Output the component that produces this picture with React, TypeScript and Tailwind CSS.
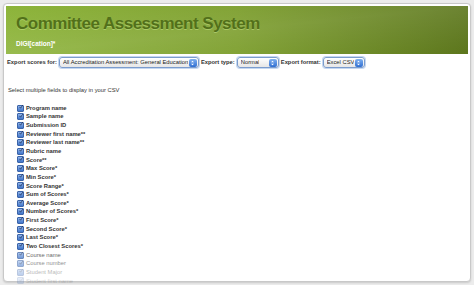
import React from "react";

type Field = { label: string; tone: "on" | "mid" | "light" | "faint" | "ghost" };

const fields: Field[] = [
  { label: "Program name", tone: "on" },
  { label: "Sample name", tone: "on" },
  { label: "Submission ID", tone: "on" },
  { label: "Reviewer first name**", tone: "on" },
  { label: "Reviewer last name**", tone: "on" },
  { label: "Rubric name", tone: "on" },
  { label: "Score**", tone: "on" },
  { label: "Max Score*", tone: "on" },
  { label: "Min Score*", tone: "on" },
  { label: "Score Range*", tone: "on" },
  { label: "Sum of Scores*", tone: "on" },
  { label: "Average Score*", tone: "on" },
  { label: "Number of Scores*", tone: "on" },
  { label: "First Score*", tone: "on" },
  { label: "Second Score*", tone: "on" },
  { label: "Last Score*", tone: "on" },
  { label: "Two Closest Scores*", tone: "on" },
  { label: "Course name", tone: "mid" },
  { label: "Course number", tone: "light" },
  { label: "Student Major", tone: "faint" },
  { label: "Student first name", tone: "ghost" },
];

const toneClass: Record<Field["tone"], string> = {
  on: "opacity-100",
  mid: "opacity-75",
  light: "opacity-55",
  faint: "opacity-35",
  ghost: "opacity-20",
};

function Checkbox() {
  return (
    <span className="flex h-[7px] w-[7px] shrink-0 items-center justify-center rounded-[1px] border border-[#3c64a8] bg-gradient-to-b from-[#8fb4ec] to-[#3f74c9]">
      <svg viewBox="0 0 10 10" className="h-[8px] w-[8px] -mt-[2px] ml-[1px]">
        <path d="M1.5 5.2 L4 8 L9 1" fill="none" stroke="#1b2a4a" strokeWidth="1.8" strokeLinecap="round" />
      </svg>
    </span>
  );
}

function Select({ value, width }: { value: string; width: string }) {
  return (
    <div
      className={`flex h-[11px] shrink-0 items-center justify-between gap-[1px] rounded-[3px] border border-[#7b9ccd] bg-gradient-to-b from-white to-[#e6e6e6] pl-[3px] pr-[1px] shadow-[0_0_0_1px_#c5d7f0] ${width}`}
    >
      <span className="overflow-hidden whitespace-nowrap text-[5.8px] font-normal leading-none text-[#222]">
        {value}
      </span>
      <span className="flex h-[8px] w-[8px] shrink-0 flex-col items-center justify-center rounded-[2px] bg-gradient-to-b from-[#7fb0f0] to-[#2f6fd2]">
        <svg viewBox="0 0 6 8" className="h-[6px] w-[5px]">
          <path d="M1 3 L3 1 L5 3 Z M1 5 L3 7 L5 5 Z" fill="white" />
        </svg>
      </span>
    </div>
  );
}

export default function App() {
  return (
    <div
      className="h-[285px] w-[474px] overflow-hidden bg-[#ececec] px-[3px] pt-[3px]"
      style={{ fontFamily: '"Liberation Sans", Arial, sans-serif' }}
    >
      <div className="h-[279px] rounded-[4px] border border-[#c8c8c8] bg-white px-[2px] pt-[2px] shadow-[0_1px_2px_rgba(0,0,0,0.15)]">
        <div className="relative h-[48px] overflow-hidden bg-gradient-to-r from-[#8db43a] via-[#7c9e2c] to-[#5c761c] pl-[10px] pt-[9px]">
          <div className="absolute inset-0 bg-gradient-to-br from-transparent via-white/10 to-transparent" />
          <h1 className="relative text-[17px] font-bold leading-[18px] tracking-[-0.5px] text-[#52701a] [text-shadow:0_1px_0_rgba(200,230,140,0.5)]">
            Committee Assessment System
          </h1>
          <div className="relative mt-[8px] text-[6.5px] font-bold leading-none text-white">
            DIGI[cation]*
          </div>
        </div>

        <div className="mt-[3px] flex items-center gap-[2px] pl-[1px] text-[5.8px] font-bold text-[#333]">
          <span className="whitespace-nowrap">Export scores for:</span>
          <Select value="All Accreditation Assessment: General Education" width="w-[140px]" />
          <span className="whitespace-nowrap">Export type:</span>
          <Select value="Normal" width="w-[42px]" />
          <span className="whitespace-nowrap">Export format:</span>
          <Select value="Excel CSV" width="w-[42px]" />
        </div>

        <p className="mt-[20px] pl-[2px] text-[5.8px] leading-none text-[#333]">
          Select multiple fields to display in your CSV
        </p>

        <ul className="mt-[10px] pl-[11px]">
          {fields.map((f) => (
            <li
              key={f.label}
              className={`flex h-[8.65px] items-center gap-[2px] text-[5.8px] font-bold text-[#333] ${toneClass[f.tone]}`}
            >
              <Checkbox />
              <span className={f.tone === "on" ? "" : "font-normal"}>{f.label}</span>
            </li>
          ))}
        </ul>
      </div>
    </div>
  );
}
